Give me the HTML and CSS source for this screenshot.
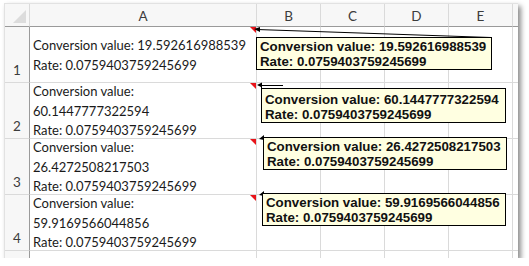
FILE: index.html
```html
<!DOCTYPE html>
<html lang="en">
<head>
  <meta charset="UTF-8" />
  <title>Conversion comments</title>
  <link rel="stylesheet" href="styles.css">
</head>
<body>

<div class="sheet">
  <div class="grid">
    <!-- header row -->
    <div class="corner"><span class="corner-tri"></span></div>
    <div class="col-head">A</div>
    <div class="col-head">B</div>
    <div class="col-head">C</div>
    <div class="col-head">D</div>
    <div class="col-head">E</div>
    <div class="col-head col-edge"></div>

    <!-- row 1 -->
    <div class="row-head">1</div>
    <div class="cell cell-a">
      <span>Conversion value: 19.592616988539</span>
      <span>Rate: 0.0759403759245699</span>
      <span class="flag"></span>
    </div>
    <div class="cell"></div><div class="cell"></div><div class="cell"></div><div class="cell"></div><div class="cell col-edge"></div>

    <!-- row 2 -->
    <div class="row-head">2</div>
    <div class="cell cell-a">
      <span>Conversion value:</span>
      <span>60.1447777322594</span>
      <span>Rate: 0.0759403759245699</span>
      <span class="flag"></span>
    </div>
    <div class="cell"></div><div class="cell"></div><div class="cell"></div><div class="cell"></div><div class="cell col-edge"></div>

    <!-- row 3 -->
    <div class="row-head">3</div>
    <div class="cell cell-a">
      <span>Conversion value:</span>
      <span>26.4272508217503</span>
      <span>Rate: 0.0759403759245699</span>
      <span class="flag"></span>
    </div>
    <div class="cell"></div><div class="cell"></div><div class="cell"></div><div class="cell"></div><div class="cell col-edge"></div>

    <!-- row 4 -->
    <div class="row-head">4</div>
    <div class="cell cell-a">
      <span>Conversion value:</span>
      <span>59.9169566044856</span>
      <span>Rate: 0.0759403759245699</span>
      <span class="flag"></span>
    </div>
    <div class="cell"></div><div class="cell"></div><div class="cell"></div><div class="cell"></div><div class="cell col-edge"></div>

    <!-- partial row 5 -->
    <div class="row-head row-edge"></div>
    <div class="cell row-edge"></div><div class="cell row-edge"></div><div class="cell row-edge"></div><div class="cell row-edge"></div><div class="cell row-edge"></div><div class="cell row-edge col-edge"></div>
  </div>

  <!-- comment leader lines -->
  <svg class="leaders" width="514" height="255" viewBox="0 0 514 255">
    <g stroke="#000" stroke-width="1" fill="none">
      <line x1="252" y1="25.5" x2="486" y2="33.5" />
      <line x1="254" y1="81.5" x2="278" y2="81.5" />
      <line x1="256.5" y1="81" x2="256.5" y2="84" />
      <line x1="257.5" y1="135" x2="257.5" y2="134" />
      <line x1="257.5" y1="191" x2="257.5" y2="190" />
    </g>
    <g fill="#000">
      <polygon points="249,25 255,23 255,28" />
      <polygon points="252,81 257,78.5 257,83.5" />
      <polygon points="254,135 259,131 259,136" />
      <polygon points="254,191 259,187 259,192" />
    </g>
  </svg>

  <div class="note note-1">
    <div>Conversion value: 19.592616988539</div>
    <div>Rate: 0.0759403759245699</div>
  </div>
  <div class="note note-2">
    <div>Conversion value: 60.1447777322594</div>
    <div>Rate: 0.0759403759245699</div>
  </div>
  <div class="note note-3">
    <div>Conversion value: 26.4272508217503</div>
    <div>Rate: 0.0759403759245699</div>
  </div>
  <div class="note note-4">
    <div>Conversion value: 59.9169566044856</div>
    <div>Rate: 0.0759403759245699</div>
  </div>
</div>

</body>
</html>
```

FILE: styles.css
```css
/* Base */
body {
  margin: 0;
  background: #fff;
  font-family: Lato, "Open Sans", sans-serif;
}

/* Screenshot frame */
.sheet {
  position: relative;
  margin: 3px 0 0 4px;
  width: 514px;
  height: 255px;
  border-top: 1px solid #e2e2e2;
  border-left: 1px solid #e2e2e2;
  box-sizing: border-box;
  box-shadow: 3px 3px 5px rgba(0,0,0,0.45);
  background: #fff;
}

/* Worksheet grid */
.grid {
  display: grid;
  grid-template-columns: 25px 227px 64px 64px 64px 64px 5px;
  grid-template-rows: 23px 56px 56px 56px 56px 8px;
  height: 100%;
  overflow: hidden;
}
.corner {
  position: relative;
  background: #f7f7f7;
  border-right: 1px solid #dadada;
  border-bottom: 1px solid #9a9a9a;
}
.corner-tri {
  position: absolute;
  right: 3px;
  bottom: 3px;
  width: 0;
  height: 0;
  border-left: 13px solid transparent;
  border-bottom: 13px solid #dcdcdc;
}
.col-head {
  display: flex;
  align-items: center;
  justify-content: center;
  background: #f7f7f7;
  border-right: 1px solid #dadada;
  border-bottom: 1px solid #9a9a9a;
  color: #3c3c3c;
  font-size: 13.5px;
  padding-top: 1px;
}
.row-head {
  display: flex;
  align-items: flex-end;
  justify-content: center;
  padding-bottom: 4px;
  background: #f7f7f7;
  border-right: 1px solid #9a9a9a;
  border-bottom: 1px solid #dadada;
  color: #3c3c3c;
  font-size: 13.5px;
}
.cell {
  border-right: 1px solid #dadada;
  border-bottom: 1px solid #dadada;
}
.col-edge {
  border-right: none;
}
.row-edge {
  border-bottom: none;
}
.cell-a {
  position: relative;
  display: flex;
  flex-direction: column;
  justify-content: center;
  padding: 2px 0 0 3px;
  font-size: 13px;
  line-height: 19.5px;
  color: #1a1a1a;
  white-space: nowrap;
}
.cell-a .flag {
  position: absolute;
  top: 0;
  right: 0;
  width: 0;
  height: 0;
  border-left: 6px solid transparent;
  border-top: 6px solid #e8141a;
}

/* Comment boxes */
.leaders {
  position: absolute;
  left: 0;
  top: 0;
  pointer-events: none;
}
.note {
  position: absolute;
  background: #ffffe1;
  border: 1px solid #000;
  font-family: "Liberation Sans", Arial, sans-serif;
  font-weight: bold;
  font-size: 13.3px;
  line-height: 15px;
  color: #111;
  padding: 1px 3px;
  white-space: nowrap;
  box-sizing: border-box;
  width: 236px;
  height: 33px;
}
.note-1 { left: 251px; top: 33px; }
.note-2 { left: 256px; top: 84px; width: 245px; height: 35px; padding-top: 3px; }
.note-3 { left: 258px; top: 133px; width: 244px; }
.note-4 { left: 257px; top: 189px; width: 244px; }
```
